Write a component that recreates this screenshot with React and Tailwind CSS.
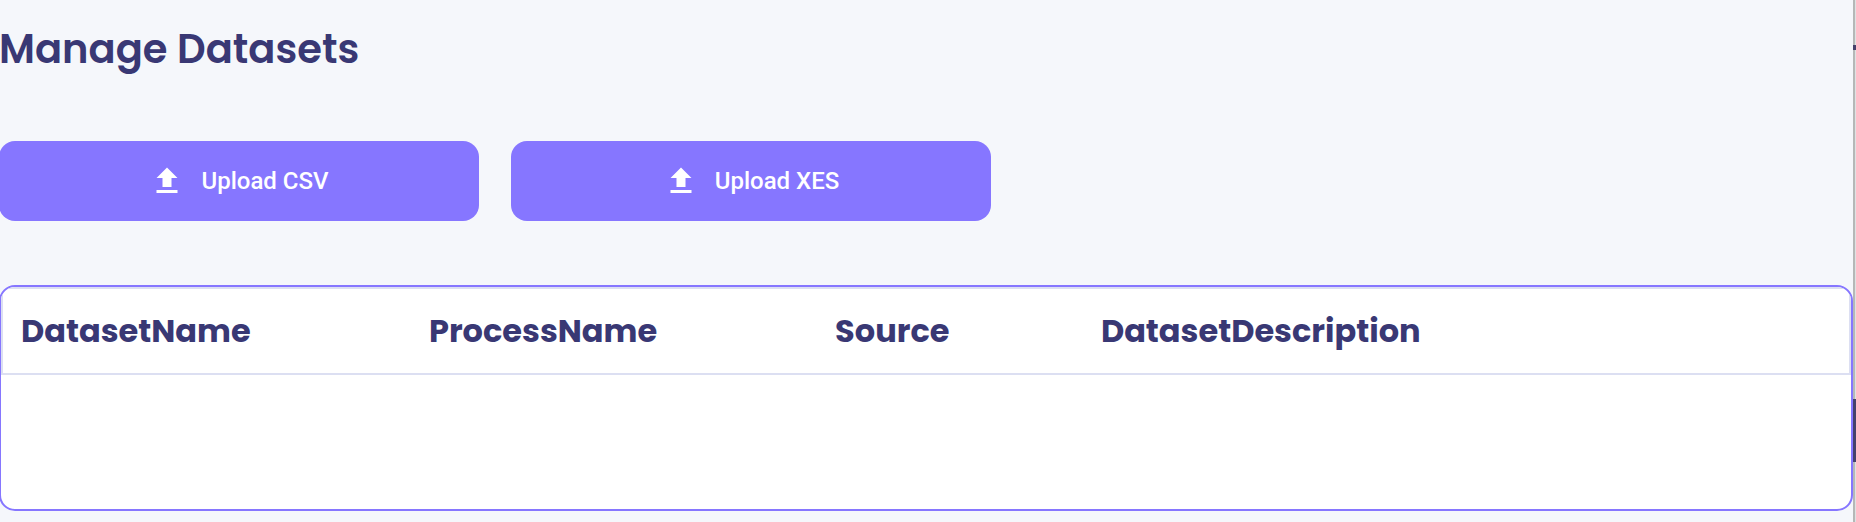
import React from 'react';

// Columns of the datasets table
const columns = [
  { name: 'DatasetName', width: 'w-[22.1%]' },
  { name: 'ProcessName', width: 'w-[22%]' },
  { name: 'Source', width: 'w-[14.4%]' },
  { name: 'DatasetDescription', width: 'w-[41.5%]' },
];

const UploadIcon = () => (
  <svg viewBox="0 0 24 24" className="w-9 h-9" fill="currentColor" aria-hidden="true">
    <path d="M5 20h14v-2H5v2zm0-10h4v6h6v-6h4l-7-7-7 7z" />
  </svg>
);

// Purple button used for each upload type
const UploadButton = ({ children }) => (
  <button
    type="button"
    className="flex h-20 w-[480px] items-center justify-center gap-4 rounded-2xl bg-[#8676ff] font-['Roboto',sans-serif] text-2xl font-medium text-white hover:bg-[#7565f0]"
  >
    <UploadIcon />
    {children}
  </button>
);

/**
 * Page for managing datasets, with the upload buttons and the dataset table.
 */
const App = () => {
  return (
    <div className="flex min-h-screen bg-[#f5f7fb] font-['Poppins','Inter',sans-serif] text-[#393874]">
      <main className="-ml-px flex min-w-0 flex-1 flex-col pb-2">
        <h1 className="pt-5 text-[40px] leading-[58px] font-semibold">Manage Datasets</h1>

        {/* Upload buttons */}
        <div className="mt-[63px] flex gap-8">
          <UploadButton>Upload CSV</UploadButton>
          <UploadButton>Upload XES</UploadButton>
        </div>

        {/* Dataset table */}
        <div className="mt-16 h-[226px] overflow-hidden rounded-2xl border-2 border-[#8676ff] bg-white">
          <table className="w-full table-fixed border-separate border-spacing-0 border-2 border-[#dcdff2] text-left">
            <thead>
              <tr>
                {columns.map((col) => (
                  <th key={col.name} scope="col" className={`h-[84px] pl-[18px] text-[32px] leading-[48px] font-bold ${col.width}`}>
                    {col.name}
                  </th>
                ))}
              </tr>
            </thead>
          </table>
        </div>
      </main>

      {/* Edge of the side panel */}
      <aside className="flex w-[3px] flex-col border-l-2 border-[#b5b8b7] bg-[#dfe2e3]">
        <div className="mt-[45px] -ml-0.5 h-[5px] bg-[#45416b]"></div>
        <div className="mt-[349px] -ml-0.5 h-[63px] bg-[#45416b]"></div>
      </aside>
    </div>
  );
};

export default App;
